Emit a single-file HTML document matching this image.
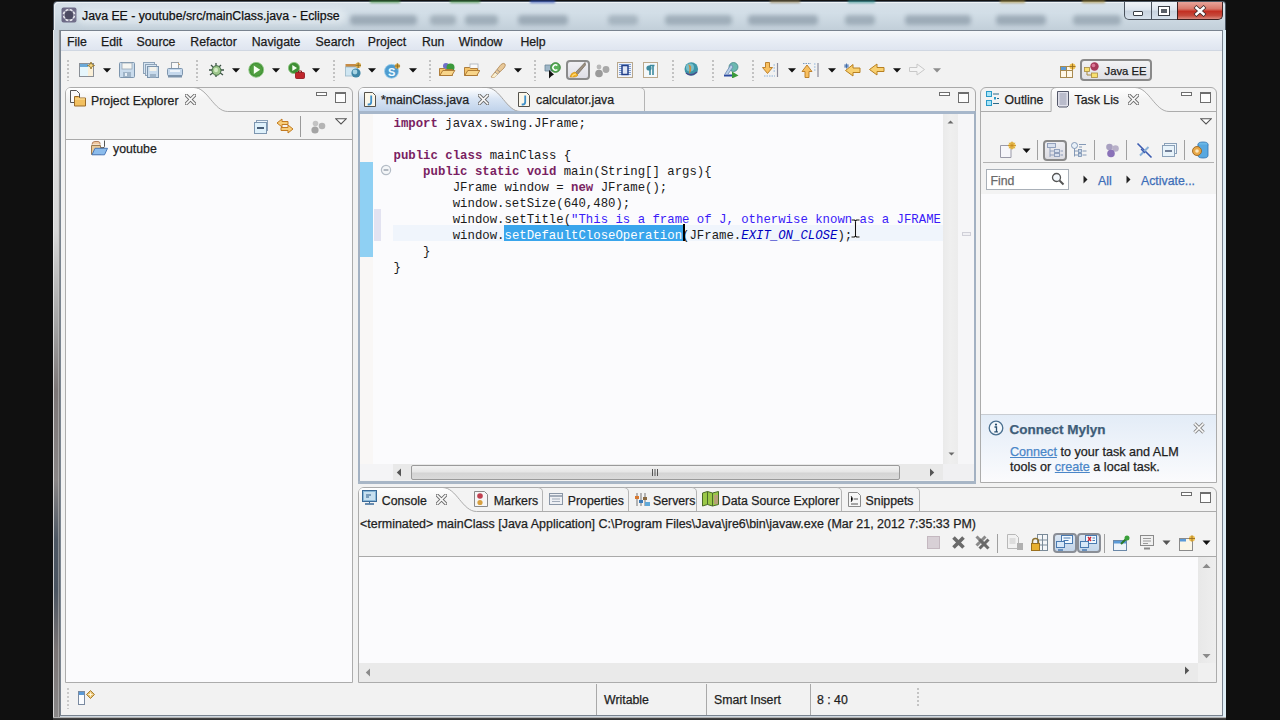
<!DOCTYPE html>
<html><head><meta charset="utf-8">
<style>
*{margin:0;padding:0;box-sizing:border-box}
html,body{width:1280px;height:720px;overflow:hidden;background:#101010}
body{position:relative;font-family:"Liberation Sans",sans-serif;font-size:12.3px;color:#1c1c1c}
.a{position:absolute}
.t{position:absolute;white-space:pre;line-height:16px;font-size:12.3px;-webkit-text-stroke:0.25px currentColor}
.code{position:absolute;font-family:"Liberation Mono",monospace;font-size:12.33px;white-space:pre;line-height:16px;color:#1a1a1a}
.kw{color:#7a1f62;font-weight:bold}
.str{color:#3a1cf8}
.fld{color:#0000c0;font-style:italic}

#root{position:absolute;left:0;top:0;width:1280px;height:720px;overflow:hidden;filter:blur(0.3px)}

</style></head>
<body>
<div class="a" style="left:53px;top:1px;width:1173px;height:719px;background:linear-gradient(180deg,#c3d0dc 0%,#cdd9e4 20%,#d5dfe8 60%,#cfd9e2 100%);border:1px solid #4c5661;border-radius:4px 3px 0 0"></div>
<div class="a" style="left:53px;top:30px;width:7px;height:690px;background:linear-gradient(180deg,#c8d2da 0px,#dcdcdc 120px,#d8d8d8 200px,#a0a0a0 300px,#7c7676 360px,#8a8686 450px,#4c5662 510px,#4a5460 560px,#7a7474 620px,#8a8888 690px)"></div>
<div class="a" style="left:53px;top:30px;width:1px;height:690px;background:rgba(240,240,240,.75)"></div>
<div class="a" style="left:58px;top:30px;width:1px;height:690px;background:rgba(200,200,200,.5)"></div>
<div class="a" style="left:59px;top:30px;width:1px;height:690px;background:rgba(110,110,110,.6)"></div>
<div class="a" style="left:1223px;top:30px;width:3px;height:690px;background:#dfeef6"></div>
<div class="a" style="left:1226px;top:0px;width:54px;height:720px;background:#101010"></div>
<div class="a" style="left:53px;top:717px;width:1173px;height:3px;background:linear-gradient(180deg,#b0b0b0 0px,#b0b0b0 1px,#4a4a4a 1px,#2e2e2e 3px)"></div>
<div class="a" style="left:54px;top:2px;width:1171px;height:28px;background:linear-gradient(180deg,#d6e0e8 0%,#d2dee7 40%,#c2cfd9 100%);border-radius:5px 5px 0 0;box-shadow:inset 0 1px 0 #eef2f5,inset 1px 0 0 #e8ecf0"></div>
<div class="a" style="left:350px;top:15px;width:67px;height:10px;background:rgba(60,78,95,0.32);filter:blur(2px);border-radius:4px"></div>
<div class="a" style="left:430px;top:15px;width:26px;height:10px;background:rgba(60,78,95,0.28);filter:blur(2px);border-radius:4px"></div>
<div class="a" style="left:465px;top:15px;width:33px;height:10px;background:rgba(60,78,95,0.3);filter:blur(2px);border-radius:4px"></div>
<div class="a" style="left:518px;top:15px;width:50px;height:10px;background:rgba(60,78,95,0.32);filter:blur(2px);border-radius:4px"></div>
<div class="a" style="left:608px;top:15px;width:30px;height:10px;background:rgba(60,78,95,0.25);filter:blur(2px);border-radius:4px"></div>
<div class="a" style="left:665px;top:15px;width:67px;height:10px;background:rgba(60,78,95,0.3);filter:blur(2px);border-radius:4px"></div>
<div class="a" style="left:748px;top:15px;width:70px;height:10px;background:rgba(60,78,95,0.32);filter:blur(2px);border-radius:4px"></div>
<div class="a" style="left:845px;top:15px;width:30px;height:10px;background:rgba(60,78,95,0.3);filter:blur(2px);border-radius:4px"></div>
<div class="a" style="left:905px;top:15px;width:66px;height:10px;background:rgba(60,78,95,0.32);filter:blur(2px);border-radius:4px"></div>
<div class="a" style="left:996px;top:15px;width:50px;height:10px;background:rgba(60,78,95,0.32);filter:blur(2px);border-radius:4px"></div>
<div class="a" style="left:1073px;top:15px;width:48px;height:10px;background:rgba(60,78,95,0.3);filter:blur(2px);border-radius:4px"></div>
<div class="a" style="left:370px;top:0px;width:30px;height:3px;background:#3f8a3f;filter:blur(1px);opacity:.7"></div>
<div class="a" style="left:450px;top:0px;width:30px;height:3px;background:#3f8a3f;filter:blur(1px);opacity:.7"></div>
<div class="a" style="left:530px;top:0px;width:25px;height:3px;background:#2a4ab0;filter:blur(1px);opacity:.7"></div>
<div class="a" style="left:770px;top:0px;width:30px;height:3px;background:#8a7a50;filter:blur(1px);opacity:.7"></div>
<div class="a" style="left:848px;top:0px;width:27px;height:3px;background:#2a8a8a;filter:blur(1px);opacity:.7"></div>
<div class="a" style="left:1000px;top:0px;width:25px;height:3px;background:#a08a40;filter:blur(1px);opacity:.7"></div>
<div class="a" style="left:1082px;top:0px;width:23px;height:3px;background:#a08a40;filter:blur(1px);opacity:.7"></div>
<svg class="a" style="left:61px;top:7px;" width="16" height="16" viewBox="0 0 16 16"><rect x="0.5" y="0.5" width="15" height="15" rx="2" fill="#6d6a86"/><circle cx="8" cy="8" r="6.3" fill="#e8e8ee"/><circle cx="8" cy="8" r="4.6" fill="#4d4b62"/><path d="M8 1.2v2M8 12.8v2M1.2 8h2M12.8 8h2M3.2 3.2l1.4 1.4M11.4 11.4l1.4 1.4M3.2 12.8l1.4-1.4M11.4 4.6l1.4-1.4" stroke="#6d6a86" stroke-width="1.3"/></svg>
<div class="a" style="left:78px;top:9px;width:268px;height:15px;background:rgba(236,242,246,.55);filter:blur(3px);border-radius:7px"></div>
<div class="t" style="left:82.0px;top:8.44px;color:#111;font-size:12.3px;">Java EE - youtube/src/mainClass.java - Eclipse</div>
<div class="a" style="left:1124px;top:2px;width:54px;height:18px;border:1px solid #4a525c;border-top:none;border-radius:0 0 0 5px;background:linear-gradient(180deg,#f1f4f8 0%,#dde5ee 45%,#c9d4e0 55%,#d8e2ec 100%)"></div>
<div class="a" style="left:1151px;top:2px;width:1px;height:17px;background:#4a525c"></div>
<div class="a" style="left:1177px;top:2px;width:46px;height:18px;border:1px solid #3d2020;border-top:none;border-radius:0 0 5px 0;background:linear-gradient(180deg,#e8a59a 0%,#d9786a 40%,#c32f22 55%,#c64a3c 80%,#dc8b7f 100%)"></div>
<div class="a" style="left:1133px;top:11px;width:10px;height:5px;border:1px solid #3a3f46;background:#fff;border-radius:1px"></div>
<div class="a" style="left:1158px;top:6px;width:12px;height:10px;border:1px solid #3a3f46;background:#fff"></div>
<div class="a" style="left:1161px;top:9px;width:6px;height:4px;background:#5a6068"></div>
<svg class="a" style="left:1193px;top:5px;" width="14" height="12" viewBox="0 0 14 12"><path d="M2 1.5L12 10.5M12 1.5L2 10.5" stroke="#3a2a2a" stroke-width="4"/><path d="M2.5 2L11.5 10M11.5 2L2.5 10" stroke="#fff" stroke-width="2.4"/></svg>
<div class="a" style="left:60px;top:30px;width:1163px;height:686px;background:#f2f2f2;border:1px solid #79838f"></div>
<div class="a" style="left:61px;top:31px;width:1161px;height:20px;background:linear-gradient(180deg,#f6f8fb 0%,#e8edf5 50%,#dfe5f0 100%);border-bottom:1px solid #d0d7e2"></div>
<div class="t" style="left:67.0px;top:33.74px;color:#1a1a1a;font-size:12.3px;">File</div>
<div class="t" style="left:101.0px;top:33.74px;color:#1a1a1a;font-size:12.3px;">Edit</div>
<div class="t" style="left:136.5px;top:33.74px;color:#1a1a1a;font-size:12.3px;">Source</div>
<div class="t" style="left:190.3px;top:33.74px;color:#1a1a1a;font-size:12.3px;">Refactor</div>
<div class="t" style="left:251.7px;top:33.74px;color:#1a1a1a;font-size:12.3px;">Navigate</div>
<div class="t" style="left:315.6px;top:33.74px;color:#1a1a1a;font-size:12.3px;">Search</div>
<div class="t" style="left:367.8px;top:33.74px;color:#1a1a1a;font-size:12.3px;">Project</div>
<div class="t" style="left:421.9px;top:33.74px;color:#1a1a1a;font-size:12.3px;">Run</div>
<div class="t" style="left:458.7px;top:33.74px;color:#1a1a1a;font-size:12.3px;">Window</div>
<div class="t" style="left:520.4px;top:33.74px;color:#1a1a1a;font-size:12.3px;">Help</div>
<div class="a" style="left:67px;top:60px;width:2px;height:21px;background:repeating-linear-gradient(180deg,#bdbdbd 0 2px,transparent 2px 4px);opacity:.9"></div>
<svg class="a" style="left:79px;top:62px;" width="16" height="16" viewBox="0 0 16 16"><rect x="0.5" y="1.5" width="14" height="13" fill="#e6f6fc" stroke="#8a8f96"/><rect x="1" y="2" width="8" height="3" fill="#6aa9d8"/><rect x="9" y="5" width="5" height="9" fill="#fbf0d8"/><path d="M12 0L13 2.5L15.5 3.5L13 4.5L12 7L11 4.5L8.5 3.5L11 2.5z" fill="#f6d680" stroke="#8a6a20" stroke-width=".8"/></svg>
<svg class="a" style="left:102.5px;top:67.5px;" width="8" height="5" viewBox="0 0 8 5"><path d="M0 0.2H8L4 4.6Z" fill="#111"/></svg>
<svg class="a" style="left:119px;top:62px;" width="16" height="16" viewBox="0 0 16 16"><rect x="0.5" y="0.5" width="15" height="15" rx="1" fill="#c9dbec" stroke="#7d95ad"/><rect x="3" y="1" width="10" height="6" fill="#f6f6f2" stroke="#9aa8b6" stroke-width=".8"/><rect x="4" y="10" width="8" height="5" fill="#9fb4c8"/><rect x="6" y="11" width="2" height="3" fill="#e6eef6"/></svg>
<svg class="a" style="left:143px;top:62px;" width="16" height="16" viewBox="0 0 16 16"><rect x="0.5" y="0.5" width="11" height="11" fill="#d7e5f2" stroke="#8ea3b8"/><rect x="2.5" y="2.5" width="11" height="11" fill="#d7e5f2" stroke="#8ea3b8"/><rect x="4.5" y="4.5" width="11" height="11" fill="#c9dbec" stroke="#7d95ad"/><rect x="6.5" y="5" width="7" height="4" fill="#f4f2ea"/><rect x="7" y="12" width="6" height="3.5" fill="#9fb4c8"/></svg>
<svg class="a" style="left:167px;top:62px;" width="16" height="16" viewBox="0 0 16 16"><rect x="4.5" y="0.5" width="7" height="6" fill="#f9f9f9" stroke="#9aa2aa"/><path d="M11 1l2 2" stroke="#d9a860"/><rect x="0.5" y="6.5" width="15" height="7" rx="1" fill="#c5d8ec" stroke="#7f96ae"/><rect x="3" y="8" width="10" height="2" fill="#eef4fa"/><rect x="1" y="13" width="14" height="2.5" fill="#7c93ab"/></svg>
<div class="a" style="left:196px;top:60px;width:2px;height:21px;background:repeating-linear-gradient(180deg,#bdbdbd 0 2px,transparent 2px 4px);opacity:.9"></div>
<svg class="a" style="left:208px;top:62px;" width="17" height="16" viewBox="0 0 17 16"><g stroke="#3d5247" stroke-width="1.3" fill="none"><path d="M8 1v3M3 3l3 3M13 3l-3 3M1 8h4M16 8h-4M2 13l4-3M15 13l-4-3M8 15v-2"/></g><ellipse cx="8.5" cy="8.5" rx="4.5" ry="4.8" fill="#9cc58a" stroke="#3f6a40" stroke-width="1"/><ellipse cx="8" cy="8" rx="2" ry="2.3" fill="#d3ecc4"/></svg>
<svg class="a" style="left:232px;top:67.5px;" width="8" height="5" viewBox="0 0 8 5"><path d="M0 0.2H8L4 4.6Z" fill="#111"/></svg>
<svg class="a" style="left:248px;top:62px;" width="17" height="16" viewBox="0 0 17 16"><circle cx="8.2" cy="7.8" r="7.4" fill="#3f8f35" stroke="#8cc77f" stroke-width=".9"/><circle cx="8.2" cy="7.8" r="6" fill="#4f9e3f"/><path d="M5.8 3.6L12.2 7.8L5.8 12Z" fill="#f8fff4"/></svg>
<svg class="a" style="left:272px;top:67.5px;" width="8" height="5" viewBox="0 0 8 5"><path d="M0 0.2H8L4 4.6Z" fill="#111"/></svg>
<svg class="a" style="left:288px;top:62px;" width="18" height="17" viewBox="0 0 18 17"><circle cx="6" cy="6" r="5.6" fill="#3f8f35" stroke="#8cc77f" stroke-width=".8"/><path d="M4.3 3L9 6L4.3 9Z" fill="#f6fff2"/><rect x="7.5" y="10.5" width="9" height="6" rx="1" fill="#c0262c" stroke="#8b1216" stroke-width=".8"/><path d="M10.5 10.5v-1.5h3v1.5" stroke="#8b1216" fill="none"/></svg>
<svg class="a" style="left:312px;top:67.5px;" width="8" height="5" viewBox="0 0 8 5"><path d="M0 0.2H8L4 4.6Z" fill="#111"/></svg>
<div class="a" style="left:333px;top:60px;width:2px;height:21px;background:repeating-linear-gradient(180deg,#bdbdbd 0 2px,transparent 2px 4px);opacity:.9"></div>
<svg class="a" style="left:345px;top:62px;" width="17" height="16" viewBox="0 0 17 16"><rect x="0.5" y="2" width="12" height="3" fill="#c68b45"/><rect x="0.5" y="5" width="12" height="9" fill="#cfe6f2" stroke="#9ab7c8" stroke-width=".8"/><circle cx="11" cy="11" r="4.6" fill="#3f86a6"/><circle cx="10" cy="10" r="2.4" fill="#bfe6f2" opacity=".8"/><circle cx="13.2" cy="3.3" r="2.8" fill="#e0b050"/><path d="M13.2 0.5v5.6M10.4 3.3h5.6" stroke="#8a6a20" stroke-width=".9"/></svg>
<svg class="a" style="left:368px;top:67.5px;" width="8" height="5" viewBox="0 0 8 5"><path d="M0 0.2H8L4 4.6Z" fill="#111"/></svg>
<svg class="a" style="left:384px;top:63px;" width="17" height="16" viewBox="0 0 17 16"><circle cx="7.5" cy="8.3" r="7" fill="#4f9ccf" stroke="#a2d4ef" stroke-width=".8"/><text x="7.6" y="12.6" font-family="Liberation Sans" font-weight="bold" font-size="11" fill="#f0fbff" text-anchor="middle">S</text><circle cx="13.4" cy="3" r="2.6" fill="#e0b050"/><path d="M13.4 0.3v5.4M10.7 3h5.4" stroke="#8a6a20" stroke-width=".9"/></svg>
<svg class="a" style="left:408.5px;top:67.5px;" width="8" height="5" viewBox="0 0 8 5"><path d="M0 0.2H8L4 4.6Z" fill="#111"/></svg>
<div class="a" style="left:429px;top:60px;width:2px;height:21px;background:repeating-linear-gradient(180deg,#bdbdbd 0 2px,transparent 2px 4px);opacity:.9"></div>
<svg class="a" style="left:439px;top:62px;" width="17" height="15" viewBox="0 0 17 15"><circle cx="7" cy="4" r="3" fill="#6e6ec8"/><circle cx="11.5" cy="5.5" r="4" fill="#3c9a3c"/><path d="M0.5 6.5h5l1 1h7v6h-13z" fill="#f5c46a" stroke="#a87430" stroke-width=".9"/><path d="M0.8 13.5l3-5h12l-3 5z" fill="#f8d58a" stroke="#a87430" stroke-width=".9"/></svg>
<svg class="a" style="left:464px;top:62px;" width="16" height="15" viewBox="0 0 16 15"><rect x="6" y="2" width="8" height="6" fill="#fafafa" stroke="#a8b0b8" stroke-width=".8"/><path d="M0.5 5.5h5l1 1h7v7h-13z" fill="#f5c46a" stroke="#a87430" stroke-width=".9"/><path d="M0.8 13.5l3-5h12l-3 5z" fill="#f8d58a" stroke="#a87430" stroke-width=".9"/></svg>
<svg class="a" style="left:489px;top:62px;" width="18" height="16" viewBox="0 0 18 16"><path d="M2 15L12 2.5Q14.5 0.5 16 2Q17 3.5 15 6L5 15.5Z" fill="#e8c898" stroke="#b59060" stroke-width=".9"/><path d="M2.5 15L7 10L9 12L5 15.5Z" fill="#faf0d0"/><path d="M6 10l3 2.5M8 7.5l3 2.5" stroke="#9a8f88" stroke-width="1"/></svg>
<svg class="a" style="left:513.5px;top:67.5px;" width="8" height="5" viewBox="0 0 8 5"><path d="M0 0.2H8L4 4.6Z" fill="#111"/></svg>
<div class="a" style="left:534px;top:60px;width:2px;height:21px;background:repeating-linear-gradient(180deg,#bdbdbd 0 2px,transparent 2px 4px);opacity:.9"></div>
<svg class="a" style="left:544px;top:62px;" width="17" height="17" viewBox="0 0 17 17"><path d="M1 3h7v6H1z" fill="#9fb7c8" stroke="#6a8598" stroke-width=".8"/><circle cx="11.5" cy="5.5" r="4.8" fill="#5ab25a" stroke="#2f7a2f" stroke-width=".9"/><path d="M13.3 3.6A2.6 2.6 0 1 0 13.3 7.4" fill="none" stroke="#fff" stroke-width="1.4"/><path d="M5 8v8.5l2.5-2.5l2.5-1.5z" fill="#111"/></svg>
<div class="a" style="left:565.5px;top:59.5px;width:24px;height:20.5px;border:2px solid #8b8b8b;border-radius:4px;background:linear-gradient(180deg,#f0f0f4,#dedee6)"></div>
<svg class="a" style="left:569px;top:62px;" width="17" height="16" viewBox="0 0 17 16"><path d="M16 0.5L6.5 10.5L8.5 12.5L16.5 3z" fill="#9c9080" stroke="#6e6458" stroke-width=".7"/><path d="M1 15Q2 10.5 6 10L9 13Q8 15.5 1 15z" fill="#f4b428" stroke="#c88a10" stroke-width=".6"/><path d="M3 14.5Q4.5 12 7 12" stroke="#fde08a" stroke-width="1.2" fill="none"/></svg>
<svg class="a" style="left:595px;top:64px;" width="15" height="14" viewBox="0 0 15 14"><circle cx="4" cy="9.5" r="3.8" fill="#9a9a9a"/><circle cx="11" cy="5.5" r="3.4" fill="#a8a8a8"/><circle cx="4" cy="3" r="2.4" fill="#b8b8b8"/></svg>
<svg class="a" style="left:617px;top:62px;" width="16" height="16" viewBox="0 0 16 16"><rect x="0.5" y="0.5" width="15" height="15" fill="#f2f4fa" stroke="#b8a88e"/><path d="M2 2.5h12M2 4.5h12M2 6.5h12M2 8.5h12M2 10.5h12M2 12.5h12" stroke="#7f9fd0" stroke-width="1"/><rect x="5" y="3.5" width="6" height="9" fill="#dfe6f6" stroke="#23408a" stroke-width="1.5"/></svg>
<svg class="a" style="left:643px;top:62px;" width="15" height="16" viewBox="0 0 15 16"><rect x="0.5" y="0.5" width="14" height="15" fill="#f4f8fa" stroke="#bba88c"/><path d="M7 3.5h4.5M7 3.5v9.5M10 3.5v9.5" stroke="#3d8a9e" stroke-width="1.6"/><circle cx="6" cy="6" r="2.6" fill="#3d8a9e"/></svg>
<div class="a" style="left:672px;top:60px;width:2px;height:21px;background:repeating-linear-gradient(180deg,#bdbdbd 0 2px,transparent 2px 4px);opacity:.9"></div>
<svg class="a" style="left:684px;top:62px;" width="15" height="14" viewBox="0 0 15 14"><circle cx="7.3" cy="7" r="6.8" fill="#3d95a8"/><circle cx="6" cy="5.5" r="4" fill="#8fd3dc" opacity=".7"/><path d="M4 2Q6 5 5 12Q8 9 7 4z" fill="#d08838" opacity=".9"/><path d="M2 11Q7 15 13 10" stroke="#4a4a8a" stroke-width="1.4" fill="none"/></svg>
<div class="a" style="left:712px;top:60px;width:2px;height:21px;background:repeating-linear-gradient(180deg,#bdbdbd 0 2px,transparent 2px 4px);opacity:.9"></div>
<svg class="a" style="left:723px;top:62px;" width="17" height="16" viewBox="0 0 17 16"><circle cx="10.5" cy="5" r="4.5" fill="#6cb8b0" stroke="#3a8080" stroke-width=".7"/><path d="M2 12L8 2.5L10 5L5 12" fill="#b8d0ea" stroke="#6a88b0" stroke-width=".8"/><path d="M1 13.5h9" stroke="#2a4aa0" stroke-width="2"/><path d="M9 9.5l6.5 4l-6.5 3z" fill="#3a9a3a"/></svg>
<div class="a" style="left:752px;top:60px;width:2px;height:21px;background:repeating-linear-gradient(180deg,#bdbdbd 0 2px,transparent 2px 4px);opacity:.9"></div>
<svg class="a" style="left:762px;top:61px;" width="17" height="18" viewBox="0 0 17 18"><path d="M3.5 1.5h4v5h3l-5 6l-5-6h3z" fill="#f8c060" stroke="#b87820" stroke-width=".9"/><path d="M11.5 4h2M11.5 7h2M11.5 10h2M2 15h11" stroke="#8ab0d8" stroke-width="1" stroke-dasharray="1.5 1"/><path d="M15.5 2v14" stroke="#8a8a9a" stroke-width="1.2"/></svg>
<svg class="a" style="left:787.5px;top:67.5px;" width="8" height="5" viewBox="0 0 8 5"><path d="M0 0.2H8L4 4.6Z" fill="#111"/></svg>
<svg class="a" style="left:801px;top:61px;" width="18" height="18" viewBox="0 0 18 18"><path d="M8 16.5h-4v-6H1l5-6.5l5 6.5H8z" fill="#f8c060" stroke="#b87820" stroke-width=".9"/><path d="M2 2.5h8" stroke="#7a9ac0" stroke-width="1" stroke-dasharray="1.5 1"/><path d="M13 3h1.5M13 6h1.5M13 9h1.5" stroke="#8ab0d8" stroke-width="1"/><path d="M17 2v14" stroke="#8a8a9a" stroke-width="1.2"/></svg>
<svg class="a" style="left:828px;top:67.5px;" width="8" height="5" viewBox="0 0 8 5"><path d="M0 0.2H8L4 4.6Z" fill="#111"/></svg>
<svg class="a" style="left:843px;top:63px;" width="18" height="14" viewBox="0 0 18 14"><path d="M17 5H10V1.5L2.5 7.5L10 13V9.5H17z" fill="#f8d070" stroke="#b88020" stroke-width="1"/><path d="M3.5 0.5v5M1 3h5M1.8 1.2l3.4 3.6M5.2 1.2L1.8 4.8" stroke="#3a68a8" stroke-width=".9"/></svg>
<svg class="a" style="left:868px;top:63px;" width="17" height="13" viewBox="0 0 17 13"><path d="M16 4.5H9V1L1.5 6.5L9 12V8.5h7z" fill="#f8d070" stroke="#b88020" stroke-width="1"/></svg>
<svg class="a" style="left:892.5px;top:67.5px;" width="8" height="5" viewBox="0 0 8 5"><path d="M0 0.2H8L4 4.6Z" fill="#111"/></svg>
<svg class="a" style="left:908px;top:63px;" width="18" height="13" viewBox="0 0 18 13"><path d="M1.5 4.5H9V1l7.5 5.5L9 12V8.5H1.5z" fill="#f4f4f4" stroke="#c8c8c8" stroke-width="1"/></svg>
<svg class="a" style="left:933px;top:67.5px;" width="8" height="5" viewBox="0 0 8 5"><path d="M0 0.2H8L4 4.6Z" fill="#8e8e8e"/></svg>
<svg class="a" style="left:1060px;top:63px;" width="16" height="15" viewBox="0 0 16 15"><rect x="0.5" y="3.5" width="12" height="11" fill="#fff8e8" stroke="#a88a50"/><path d="M0.5 7.5h12M6.5 3.5v11" stroke="#a88a50"/><rect x="1" y="4" width="5" height="3" fill="#5a9ad8"/><circle cx="12.5" cy="3.5" r="3" fill="#f0c050"/><path d="M12.5 0.5v6M9.5 3.5h6" stroke="#9a7020" stroke-width=".9"/></svg>
<div class="a" style="left:1080px;top:59px;width:72px;height:22px;border:2px solid #8a8a8a;border-radius:4px;background:linear-gradient(180deg,#f2f2f4,#e0e0e6)"></div>
<svg class="a" style="left:1084px;top:62px;" width="16" height="16" viewBox="0 0 16 16"><rect x="0.5" y="5.5" width="5" height="4" fill="#f8e070" stroke="#a88a40" stroke-width=".8"/><rect x="7.5" y="11" width="6" height="4.5" fill="#f8e070" stroke="#a88a40" stroke-width=".8"/><path d="M3 9.5v3.5h4.5" stroke="#a88a40" fill="none"/><circle cx="10.5" cy="4.5" r="4.2" fill="#a83a5a"/><circle cx="9.5" cy="3.5" r="1.8" fill="#e888a8" opacity=".8"/></svg>
<div class="t" style="left:1104.5px;top:63.28px;color:#1a1a1a;font-size:11.3px;">Java EE</div>
<div class="a" style="left:65px;top:87px;width:288px;height:596px;border:1px solid #acacac;border-radius:6px 6px 0 0;background:#f3f3f3"></div>
<svg class="a" style="left:65px;top:87px;" width="288" height="25" viewBox="0 0 288 25"><defs><linearGradient id="gpe" x1="0" y1="0" x2="0" y2="1"><stop offset="0" stop-color="#ffffff"/><stop offset="0.5" stop-color="#f3f3f3"/><stop offset="1" stop-color="#f3f3f3"/></linearGradient></defs><path d="M1,25 L1,6 Q1,1 6,1 L128.75,1 C142.75,1 148.75,24.5 162.75,24.5 L162.75,25 Z" fill="url(#gpe)"/><path d="M124.75,0.5 L128.75,0.5 C142.75,0.5 148.75,24.5 162.75,24.5 L288,24.5" fill="none" stroke="#acacac" stroke-width="1"/></svg>
<div class="a" style="left:66px;top:139px;width:286px;height:1px;background:#a9a9a9"></div>
<div class="a" style="left:66px;top:140px;width:286px;height:542px;background:#fbfbfd"></div>
<div class="t" style="left:91.0px;top:92.64px;color:#1e1e1e;font-size:12.3px;">Project Explorer</div>
<div class="t" style="left:113.0px;top:141.34px;color:#1e1e1e;font-size:12.3px;">youtube</div>
<div class="a" style="left:358px;top:87px;width:618px;height:397px;border:1px solid #a9a9a9;border-radius:6px 6px 0 0;background:#f3f3f3"></div>
<svg class="a" style="left:358px;top:87px;" width="618" height="25" viewBox="0 0 618 25"><defs><linearGradient id="ged" x1="0" y1="0" x2="0" y2="1"><stop offset="0" stop-color="#ffffff"/><stop offset="0.45" stop-color="#d9e5f4"/><stop offset="1" stop-color="#bed1ea"/></linearGradient></defs><path d="M1,25 L1,6 Q1,1 6,1 L128.39999999999998,1 C142.39999999999998,1 148.39999999999998,24.5 162.39999999999998,24.5 L162.39999999999998,25 Z" fill="url(#ged)"/><path d="M124.39999999999998,0.5 L128.39999999999998,0.5 C142.39999999999998,0.5 148.39999999999998,24.5 162.39999999999998,24.5 L618,24.5" fill="none" stroke="#a3a3a3" stroke-width="1"/><path d="M286.5,24 L286.5,5 Q286.5,1 282,0.5" fill="none" stroke="#b4b4b4" stroke-width="1"/></svg>
<div class="a" style="left:359px;top:111px;width:616px;height:3px;background:#a7b7cb"></div>
<div class="a" style="left:358px;top:111px;width:2px;height:372px;background:#a3b1c2"></div>
<div class="a" style="left:974px;top:111px;width:2px;height:372px;background:#a3b1c2"></div>
<div class="a" style="left:358px;top:481px;width:618px;height:3px;background:#a8b6c6"></div>
<div class="a" style="left:360px;top:114px;width:614px;height:366px;background:#fbfbfd"></div>
<div class="t" style="left:380.9px;top:92.44px;color:#1e1e1e;font-size:12.3px;">*mainClass.java</div>
<div class="t" style="left:536.1px;top:92.44px;color:#1e1e1e;font-size:12.3px;">calculator.java</div>
<div class="a" style="left:980px;top:87px;width:237px;height:396px;border:1px solid #acacac;border-radius:6px 6px 0 0;background:#f3f3f3"></div>
<svg class="a" style="left:980px;top:87px;" width="237" height="25" viewBox="0 0 237 25"><defs><linearGradient id="gtl" x1="0" y1="0" x2="0" y2="1"><stop offset="0" stop-color="#ffffff"/><stop offset="0.5" stop-color="#f3f3f3"/><stop offset="1" stop-color="#f3f3f3"/></linearGradient></defs><path d="M71.09999999999991,25 L71.09999999999991,6 Q71.09999999999991,1 76.59999999999991,1 L155,1 C169,1 175,24.5 189,24.5 L189,25 Z" fill="url(#gtl)"/><path d="M0,24.5 L71.09999999999991,24.5 L71.09999999999991,6 Q71.09999999999991,0.5 76.59999999999991,0.5 M151,0.5 L155,0.5 C169,0.5 175,24.5 189,24.5 L237,24.5" fill="none" stroke="#acacac" stroke-width="1"/></svg>
<div class="a" style="left:981px;top:194px;width:235px;height:221px;background:#fbfbfd"></div>
<div class="t" style="left:1004.5px;top:92.44px;color:#1e1e1e;font-size:12.3px;">Outline</div>
<div class="t" style="left:1074.6px;top:92.44px;color:#1e1e1e;font-size:12.3px;">Task Lis</div>
<div class="a" style="left:358px;top:487px;width:859px;height:196px;border:1px solid #acacac;border-radius:6px 6px 0 0;background:#f3f3f3"></div>
<svg class="a" style="left:358px;top:487px;" width="859" height="25" viewBox="0 0 859 25"><defs><linearGradient id="gco" x1="0" y1="0" x2="0" y2="1"><stop offset="0" stop-color="#ffffff"/><stop offset="0.5" stop-color="#f3f3f3"/><stop offset="1" stop-color="#f3f3f3"/></linearGradient></defs><path d="M1,25 L1,6 Q1,1 6,1 L84.5,1 C98.5,1 104.5,24.5 118.5,24.5 L118.5,25 Z" fill="url(#gco)"/><path d="M80.5,0.5 L84.5,0.5 C98.5,0.5 104.5,24.5 118.5,24.5 L859,24.5" fill="none" stroke="#acacac" stroke-width="1"/><path d="M184.5,24 L184.5,5 Q184.5,1 180,0.5" fill="none" stroke="#b4b4b4" stroke-width="1"/><path d="M270.5,24 L270.5,5 Q270.5,1 266,0.5" fill="none" stroke="#b4b4b4" stroke-width="1"/><path d="M338.5,24 L338.5,5 Q338.5,1 334,0.5" fill="none" stroke="#b4b4b4" stroke-width="1"/><path d="M483.5,24 L483.5,5 Q483.5,1 479,0.5" fill="none" stroke="#b4b4b4" stroke-width="1"/><path d="M561.5,24 L561.5,5 Q561.5,1 557,0.5" fill="none" stroke="#b4b4b4" stroke-width="1"/></svg>
<div class="a" style="left:359px;top:556px;width:857px;height:1px;background:#a9a9a9"></div>
<div class="a" style="left:359px;top:557px;width:857px;height:106px;background:#fbfbfd"></div>
<div class="t" style="left:381.8px;top:492.64px;color:#1e1e1e;font-size:12.3px;">Console</div>
<div class="t" style="left:493.8px;top:492.64px;color:#1e1e1e;font-size:12.3px;">Markers</div>
<div class="t" style="left:567.8px;top:492.64px;color:#1e1e1e;font-size:12.3px;">Properties</div>
<div class="t" style="left:653.0px;top:492.64px;color:#1e1e1e;font-size:12.3px;">Servers</div>
<div class="t" style="left:721.8px;top:492.64px;color:#1e1e1e;font-size:12.3px;">Data Source Explorer</div>
<div class="t" style="left:865.6px;top:492.64px;color:#1e1e1e;font-size:12.3px;">Snippets</div>
<div class="t" style="left:360.0px;top:515.89px;color:#1e1e1e;font-size:12.45px;">&lt;terminated&gt; mainClass [Java Application] C:\Program Files\Java\jre6\bin\javaw.exe (Mar 21, 2012 7:35:33 PM)</div>
<div class="a" style="left:360px;top:114px;width:13px;height:366px;background:#f9f7f6"></div>
<div class="a" style="left:360px;top:162px;width:13px;height:95px;background:#8fd0f3"></div>
<div class="a" style="left:374px;top:209px;width:7px;height:32px;background:#e3e3f1"></div>
<div class="a" style="left:393px;top:225px;width:550px;height:16px;background:#f0f5fc"></div>
<div class="a" style="left:504px;top:225px;width:179px;height:16px;background:#39a5ec"></div>
<svg class="a" style="left:380px;top:164px;" width="12" height="12" viewBox="0 0 12 12"><circle cx="6" cy="6" r="4.6" fill="#f4f6f8" stroke="#b4bcc6" stroke-width="1.2"/><path d="M3.6 6h4.8" stroke="#8d97a3" stroke-width="1.3"/></svg>
<div class="code" style="left:393.5px;top:115.51px;width:549px;height:350px;overflow:hidden"><span class="kw">import</span> javax.swing.JFrame;<br><br><span class="kw">public</span> <span class="kw">class</span> mainClass {<br>    <span class="kw">public</span> <span class="kw">static</span> <span class="kw">void</span> main(String[] args){<br>        JFrame window = <span class="kw">new</span> JFrame();<br>        window.setSize(640,480);<br>        window.setTitle(<span class="str">"This is a frame of J, otherwise known as a JFRAME</span><br>        window.<span style="color:#fff">setDefaultCloseOperation</span>(JFrame.<span class="fld">EXIT_ON_CLOSE</span>);<br>    }<br>}</div>
<div class="a" style="left:683px;top:224px;width:2px;height:17px;background:#000"></div>
<svg class="a" style="left:70px;top:90px;" width="16" height="17" viewBox="0 0 16 17"><path d="M0.5 0.5h6l3 3v9h-9z" fill="#fafafa" stroke="#555" stroke-width="1"/><path d="M4.5 6.5h4l1.5 1.5h5.5v8h-11z" fill="#f2c060" stroke="#9a6a28" stroke-width="1"/><path d="M5 9h10" stroke="#f8dc98" stroke-width="1.2"/></svg>
<svg class="a" style="left:185px;top:94px;" width="11" height="11" viewBox="0 0 11 11"><path d="M1.5 1.5L9.5 9.5M9.5 1.5L1.5 9.5" stroke="#6d6d6d" stroke-width="3.4" stroke-linecap="square"/><path d="M1.5 1.5L9.5 9.5M9.5 1.5L1.5 9.5" stroke="#fbfbfb" stroke-width="1.6" stroke-linecap="square"/></svg>
<div class="a" style="left:316px;top:92px;width:11px;height:4px;border:1px solid #6e6e6e;background:#fdfdfd"></div>
<div class="a" style="left:335px;top:92px;width:11px;height:11px;border:1px solid #6e6e6e;border-top:2px solid #6e6e6e;background:#fdfdfd"></div>
<svg class="a" style="left:254px;top:120px;" width="15" height="14" viewBox="0 0 15 14"><rect x="2.5" y="0.5" width="11" height="10" fill="#eef6fc" stroke="#8aa0b8"/><rect x="0.5" y="2.5" width="12" height="11" fill="#dff1fb" stroke="#7d96b0"/><path d="M3 8h7" stroke="#223a58" stroke-width="1.6"/></svg>
<svg class="a" style="left:276px;top:118px;" width="18" height="16" viewBox="0 0 18 16"><path d="M1 5l5-4v2.5h6v3H6V9z" fill="#f8cd78" stroke="#c27a20" stroke-width="1"/><path d="M17 11l-5-4v2.5H5v3h7V15z" fill="#f8cd78" stroke="#c27a20" stroke-width="1"/></svg>
<div class="a" style="left:300px;top:116px;width:1px;height:21px;background:#9a9a9a"></div>
<svg class="a" style="left:311px;top:120px;" width="15" height="14" viewBox="0 0 15 14"><circle cx="4" cy="10" r="3.6" fill="#a4a4a4"/><circle cx="11" cy="6" r="3.3" fill="#b4b4b4"/><circle cx="4.5" cy="3.5" r="2.8" fill="#c4c4c4"/></svg>
<svg class="a" style="left:335px;top:118px;" width="12" height="7" viewBox="0 0 12 7"><path d="M0.8 0.8h10.4L6 6z" fill="#fff" stroke="#555" stroke-width="1.1"/></svg>
<svg class="a" style="left:91px;top:140px;" width="18" height="16" viewBox="0 0 18 16"><path d="M1 4.5q0-3 3-3h3q2 0 2 2v1" fill="#f0c9a0" stroke="#b08060" stroke-width="1"/><path d="M0.5 5.5h9v9h-9z" fill="#e8c898" stroke="#9a7a50" stroke-width="1"/><path d="M1 14.8l3-6.5h12.5l-3 6.5z" fill="#8cbcec" stroke="#4a78b8" stroke-width="1"/><path d="M13.5 0.5v6q0 1.2-1.5 1.2h-2" stroke="#555" stroke-width="1" fill="none"/></svg>
<svg class="a" style="left:364px;top:92px;" width="12" height="15" viewBox="0 0 12 15"><path d="M0.5 0.5h8l3 3v11h-11z" fill="#fbf7ea" stroke="#55524c" stroke-width="1"/><path d="M7.2 3.5v6.5q0 2.5-2.5 2.5h-1" stroke="#3f8fc8" stroke-width="1.8" fill="none"/></svg>
<svg class="a" style="left:478px;top:94px;" width="11" height="11" viewBox="0 0 11 11"><path d="M1.5 1.5L9.5 9.5M9.5 1.5L1.5 9.5" stroke="#6d6d6d" stroke-width="3.4" stroke-linecap="square"/><path d="M1.5 1.5L9.5 9.5M9.5 1.5L1.5 9.5" stroke="#fbfbfb" stroke-width="1.6" stroke-linecap="square"/></svg>
<svg class="a" style="left:518px;top:92px;" width="12" height="15" viewBox="0 0 12 15"><path d="M0.5 0.5h8l3 3v11h-11z" fill="#fbf7ea" stroke="#55524c" stroke-width="1"/><path d="M7.2 3.5v6.5q0 2.5-2.5 2.5h-1" stroke="#3f8fc8" stroke-width="1.8" fill="none"/></svg>
<div class="a" style="left:939px;top:92px;width:11px;height:4px;border:1px solid #6e6e6e;background:#fdfdfd"></div>
<div class="a" style="left:958px;top:92px;width:11px;height:11px;border:1px solid #6e6e6e;border-top:2px solid #6e6e6e;background:#fdfdfd"></div>
<svg class="a" style="left:986px;top:91px;" width="14" height="16" viewBox="0 0 14 16"><rect x="0.5" y="0.5" width="5" height="5" fill="#a8e4f8" stroke="#2a9ac8"/><rect x="0.5" y="9.5" width="5" height="5" fill="#a8e4f8" stroke="#2a9ac8"/><path d="M7 3h6M8 7.5h1.5M11 7.5h2M7 12.5h6" stroke="#2a6a8a" stroke-width="1"/><rect x="8" y="6" width="2" height="2.5" fill="#2a9ac8"/></svg>
<svg class="a" style="left:1057px;top:91px;" width="13" height="17" viewBox="0 0 13 17"><path d="M0.5 0.5h11v14l-1.5 1.5h-8l-1.5-1.5z" fill="#e0e0ea" stroke="#55596a" stroke-width="1"/><path d="M2.5 3h7M2.5 5h7M2.5 7h7M2.5 9h7M2.5 11h7M2.5 13h7" stroke="#8a8fa6" stroke-width=".9"/></svg>
<svg class="a" style="left:1127.5px;top:94px;" width="11" height="11" viewBox="0 0 11 11"><path d="M1.5 1.5L9.5 9.5M9.5 1.5L1.5 9.5" stroke="#6d6d6d" stroke-width="3.4" stroke-linecap="square"/><path d="M1.5 1.5L9.5 9.5M9.5 1.5L1.5 9.5" stroke="#fbfbfb" stroke-width="1.6" stroke-linecap="square"/></svg>
<div class="a" style="left:1181px;top:92px;width:11px;height:4px;border:1px solid #6e6e6e;background:#fdfdfd"></div>
<div class="a" style="left:1200px;top:92px;width:11px;height:11px;border:1px solid #6e6e6e;border-top:2px solid #6e6e6e;background:#fdfdfd"></div>
<svg class="a" style="left:1200px;top:118px;" width="12" height="7" viewBox="0 0 12 7"><path d="M0.8 0.8h10.4L6 6z" fill="#fff" stroke="#555" stroke-width="1.1"/></svg>
<svg class="a" style="left:1000px;top:141px;" width="17" height="17" viewBox="0 0 17 17"><path d="M0.5 4.5h9l1.5 1.5v10.5h-10.5z" fill="#f6f6fa" stroke="#9a9aa8"/><circle cx="12" cy="4.5" r="3.6" fill="#f0c850" opacity=".9"/><path d="M12 0.5v8M8 4.5h8M9.3 1.8l5.4 5.4M14.7 1.8l-5.4 5.4" stroke="#c88a20" stroke-width=".8"/></svg>
<svg class="a" style="left:1022px;top:148px;" width="9" height="6" viewBox="0 0 9 6"><path d="M0.5 0.5H8.5L4.5 5z" fill="#111"/></svg>
<div class="a" style="left:1037px;top:140px;width:1px;height:20px;background:#a0a0a0"></div>
<div class="a" style="left:1043px;top:140px;width:24px;height:21px;border:2px solid #8a8a8a;border-radius:4px;background:linear-gradient(180deg,#eeeef2,#dcdce2)"></div>
<svg class="a" style="left:1047px;top:143px;" width="17" height="15" viewBox="0 0 17 15"><rect x="0.5" y="0.5" width="8" height="4" fill="#d8e0ee" stroke="#8a9ab8" stroke-width=".9"/><path d="M3 5v9M3 8h4M3 12h4" stroke="#8a9ab8" stroke-width=".9"/><rect x="7.5" y="6.5" width="5" height="3" fill="#d8e0ee" stroke="#8a9ab8" stroke-width=".9"/><rect x="7.5" y="10.5" width="5" height="3" fill="#d8e0ee" stroke="#8a9ab8" stroke-width=".9"/><path d="M13.5 8h2.5M13.5 12h2.5" stroke="#8a9ab8"/></svg>
<svg class="a" style="left:1071px;top:142px;" width="16" height="16" viewBox="0 0 16 16"><circle cx="3.5" cy="3.5" r="3" fill="#e8f0f8" stroke="#7890b0" stroke-width=".9"/><path d="M3.5 6.5v8M3.5 9h4M3.5 13h4" stroke="#7890b0" stroke-width=".9"/><rect x="7.5" y="7.5" width="3" height="3" fill="#c8d8ea" stroke="#7890b0" stroke-width=".8"/><rect x="7.5" y="11.5" width="3" height="3" fill="#c8d8ea" stroke="#7890b0" stroke-width=".8"/><path d="M11.5 9h4M11.5 13h4M8 2.5h7M8 5h3" stroke="#7890b0" stroke-width=".9"/></svg>
<div class="a" style="left:1094px;top:140px;width:1px;height:20px;background:#a0a0a0"></div>
<svg class="a" style="left:1105px;top:143px;" width="15" height="15" viewBox="0 0 15 15"><circle cx="4.5" cy="4" r="3.3" fill="#a8a0c0"/><circle cx="10.5" cy="5.5" r="3.3" fill="#b8b0c8"/><circle cx="6" cy="10.5" r="3.8" fill="#8a72b8"/></svg>
<div class="a" style="left:1126px;top:140px;width:1px;height:20px;background:#a0a0a0"></div>
<svg class="a" style="left:1136px;top:142px;" width="17" height="17" viewBox="0 0 17 17"><path d="M1.5 1.5L15.5 15.5" stroke="#3a5ab0" stroke-width="1.6"/><path d="M4 13.5L12.5 5" stroke="#8ab0d8" stroke-width="2"/><path d="M5 7l4 4" stroke="#3a5ab0" stroke-width="1.2"/></svg>
<svg class="a" style="left:1162px;top:143px;" width="15" height="14" viewBox="0 0 15 14"><rect x="2.5" y="0.5" width="12" height="10" fill="#eef6fc" stroke="#8aa0b8"/><rect x="0.5" y="2.5" width="12" height="11" fill="#e8f3fa" stroke="#8aa0b8"/><path d="M3 8h7" stroke="#4a5a78" stroke-width="1.5"/></svg>
<div class="a" style="left:1184px;top:140px;width:1px;height:20px;background:#a0a0a0"></div>
<svg class="a" style="left:1192px;top:141px;" width="17" height="18" viewBox="0 0 17 18"><ellipse cx="11" cy="3.5" rx="5" ry="2.5" fill="#6ab8e8" stroke="#2a70b0" stroke-width=".8"/><path d="M6 3.5v11q0 2.5 5 2.5t5-2.5v-11" fill="#58a8e0" stroke="#2a70b0" stroke-width=".8"/><circle cx="5" cy="10" r="4.5" fill="#e8a848" stroke="#9a6420" stroke-width=".9"/><circle cx="5" cy="10" r="1.8" fill="#fbe8c0"/></svg>
<div class="a" style="left:983px;top:162px;width:231px;height:1px;background:#b2b2b2"></div>
<div class="a" style="left:986px;top:169px;width:83px;height:21px;border:1px solid #a9b0b8;background:#fff"></div>
<div class="t" style="left:990.5px;top:172.64px;color:#6a6a6a;font-size:12.3px;">Find</div>
<svg class="a" style="left:1051px;top:172px;" width="14" height="14" viewBox="0 0 14 14"><circle cx="5.5" cy="5.5" r="4" fill="#f4f8fc" stroke="#555" stroke-width="1.3"/><path d="M8.5 8.5l4 4" stroke="#555" stroke-width="2"/></svg>
<svg class="a" style="left:1083px;top:175px;" width="5" height="9" viewBox="0 0 5 9"><path d="M0.5 0.5L4.5 4.5L0.5 8.5z" fill="#222"/></svg>
<div class="t" style="left:1098.0px;top:172.64px;color:#3d6eb8;font-size:12.3px;">All</div>
<svg class="a" style="left:1126px;top:175px;" width="5" height="9" viewBox="0 0 5 9"><path d="M0.5 0.5L4.5 4.5L0.5 8.5z" fill="#222"/></svg>
<div class="t" style="left:1141.0px;top:172.64px;color:#3d6eb8;font-size:12.3px;">Activate...</div>
<div class="a" style="left:981px;top:414px;width:235px;height:1px;background:#c8ccd2"></div>
<div class="a" style="left:981px;top:415px;width:235px;height:67px;background:linear-gradient(180deg,#e3ecf7 0%,#eef3fa 45%,#fbfbfd 100%)"></div>
<svg class="a" style="left:988px;top:420px;" width="16" height="16" viewBox="0 0 16 16"><circle cx="8" cy="8" r="6.8" fill="#f4f8fc" stroke="#4a7090" stroke-width="1.3"/><circle cx="8" cy="4.6" r="1.1" fill="#2a5070"/><path d="M6.5 7h2v4.5M6.3 11.8h3.6" stroke="#2a5070" stroke-width="1.3" fill="none"/></svg>
<div class="t" style="left:1009.5px;top:421.52px;color:#3e5d78;font-size:13.5px;font-weight:bold">Connect Mylyn</div>
<svg class="a" style="left:1193px;top:422px;" width="12" height="12" viewBox="0 0 12 12"><path d="M1.5 1.5L10.5 10.5M10.5 1.5L1.5 10.5" stroke="#8a8a8a" stroke-width="3.4"/><path d="M1.5 1.5L10.5 10.5M10.5 1.5L1.5 10.5" stroke="#fbfbfb" stroke-width="1.6"/></svg>
<div class="t" style="left:1010px;top:443.94px;font-size:12.6px;color:#1e1e1e"><span style="color:#4a86c8;text-decoration:underline">Connect</span> to your task and ALM</div>
<div class="t" style="left:1010px;top:459.14px;font-size:12.6px;color:#1e1e1e">tools or <span style="color:#4a86c8;text-decoration:underline">create</span> a local task.</div>
<div class="a" style="left:943px;top:114px;width:15px;height:350px;background:linear-gradient(90deg,#eaeaea,#efefef 50%,#ececec)"></div>
<div class="a" style="left:958px;top:114px;width:16px;height:350px;background:#f6f6f8"></div>
<svg class="a" style="left:946px;top:119px;" width="9" height="6" viewBox="0 0 9 6"><path d="M1.5 4.5L4.5 1.5L7.5 4.5z" fill="#6a6a6a"/></svg>
<svg class="a" style="left:947px;top:451px;" width="9" height="6" viewBox="0 0 9 6"><path d="M1.5 1.5L4.5 4.5L7.5 1.5z" fill="#6a6a6a"/></svg>
<div class="a" style="left:962px;top:232px;width:9px;height:4px;border:1px solid #d0d0d8;background:#f0f0f4"></div>
<div class="a" style="left:360px;top:464px;width:33px;height:16px;background:#f4f4f6"></div>
<div class="a" style="left:393px;top:464px;width:550px;height:16px;background:#e9e9e9"></div>
<div class="a" style="left:943px;top:464px;width:31px;height:16px;background:#f0f0f2"></div>
<svg class="a" style="left:396px;top:468px;" width="6" height="9" viewBox="0 0 6 9"><path d="M5 0.5L0.8 4.5L5 8.5z" fill="#555"/></svg>
<svg class="a" style="left:929px;top:468px;" width="6" height="9" viewBox="0 0 6 9"><path d="M1 0.5L5.2 4.5L1 8.5z" fill="#555"/></svg>
<div class="a" style="left:411px;top:465px;width:489px;height:15px;border:1px solid #9a9a9a;border-radius:2px;background:linear-gradient(180deg,#f2f2f2 0%,#e6e6e6 45%,#d4d4d4 55%,#dadada 100%)"></div>
<svg class="a" style="left:651px;top:469px;" width="8" height="7" viewBox="0 0 8 7"><path d="M1.5 0v7M4 0v7M6.5 0v7" stroke="#555" stroke-width="1"/></svg>
<div class="a" style="left:1198px;top:557px;width:18px;height:106px;background:linear-gradient(90deg,#e8e8e8,#eeeeee)"></div>
<svg class="a" style="left:1202px;top:563px;" width="9" height="6" viewBox="0 0 9 6"><path d="M0.5 5L4.5 0.8L8.5 5z" fill="#8a8a8a"/></svg>
<svg class="a" style="left:1202px;top:653px;" width="9" height="6" viewBox="0 0 9 6"><path d="M0.5 1L4.5 5.2L8.5 1z" fill="#8a8a8a"/></svg>
<div class="a" style="left:359px;top:663px;width:839px;height:19px;background:#eaeaea"></div>
<div class="a" style="left:1198px;top:663px;width:18px;height:19px;background:#f0f0f0"></div>
<svg class="a" style="left:365px;top:668px;" width="6" height="9" viewBox="0 0 6 9"><path d="M5 0.5L0.8 4.5L5 8.5z" fill="#8a8a8a"/></svg>
<svg class="a" style="left:1184px;top:666px;" width="6" height="9" viewBox="0 0 6 9"><path d="M1 0.5L5.2 4.5L1 8.5z" fill="#555"/></svg>
<svg class="a" style="left:849px;top:219px;" width="12" height="19" viewBox="0 0 12 19"><path d="M2.5 1h3l1 1l1-1h3M6.5 2v15M2.5 18h3l1-1l1 1h3" stroke="#fff" stroke-width="2.6" fill="none"/><path d="M2.5 1h3l1 1l1-1h3M6.5 2v15M2.5 18h3l1-1l1 1h3" stroke="#111" stroke-width="1.1" fill="none"/></svg>
<svg class="a" style="left:362px;top:490px;" width="15" height="15" viewBox="0 0 15 15"><rect x="0.5" y="0.5" width="14" height="11" fill="#8ab8d8" stroke="#3a6a98" stroke-width="1"/><rect x="2" y="2" width="11" height="8" fill="#c8e0f0"/><path d="M4 5h5M4 7h3" stroke="#2a5a88"/><path d="M3 14h9" stroke="#3a6a98" stroke-width="1.5"/><path d="M7.5 11.5v2" stroke="#3a6a98"/></svg>
<svg class="a" style="left:436px;top:494px;" width="11" height="11" viewBox="0 0 11 11"><path d="M1.5 1.5L9.5 9.5M9.5 1.5L1.5 9.5" stroke="#6d6d6d" stroke-width="3.4" stroke-linecap="square"/><path d="M1.5 1.5L9.5 9.5M9.5 1.5L1.5 9.5" stroke="#fbfbfb" stroke-width="1.6" stroke-linecap="square"/></svg>
<svg class="a" style="left:474px;top:491px;" width="15" height="16" viewBox="0 0 15 16"><path d="M0.5 0.5h10l3 3v12h-13z" fill="#f6f6f6" stroke="#8a8a8a"/><circle cx="6" cy="5" r="2.8" fill="#c04050"/><circle cx="6" cy="11.5" r="2.6" fill="#d8a040"/></svg>
<svg class="a" style="left:549px;top:493px;" width="14" height="12" viewBox="0 0 14 12"><rect x="0.5" y="0.5" width="13" height="11" fill="#eef0f4" stroke="#8a96a6"/><path d="M0.5 3h13" stroke="#8a96a6" stroke-width="1.5"/><path d="M3 6h8M3 8.5h8" stroke="#a0aab8"/></svg>
<svg class="a" style="left:635px;top:492px;" width="15" height="15" viewBox="0 0 15 15"><path d="M2 1v13M6 1v13M10 1v13" stroke="#8a8a8a" stroke-width="1.2"/><rect x="0" y="4" width="4" height="3" fill="#d87830"/><rect x="4" y="8" width="4" height="3" fill="#3a7ab8"/><rect x="8" y="5" width="4" height="3" fill="#8a6a40"/><rect x="10" y="10" width="5" height="4" fill="#60a8d8"/></svg>
<svg class="a" style="left:702px;top:491px;" width="17" height="16" viewBox="0 0 17 16"><path d="M0.5 2l5 -1.5l5 1.5l6-1.5v13l-6 1.5l-5-1.5l-5 1.5z" fill="#9ac848" stroke="#4a6a28" stroke-width="1"/><path d="M5.5 0.5v13M10.5 2v13" stroke="#4a6a28" stroke-width="1"/><rect x="12" y="4" width="4" height="9" fill="#b8a078"/></svg>
<svg class="a" style="left:848px;top:492px;" width="14" height="15" viewBox="0 0 14 15"><path d="M0.5 0.5h9l3 3v11h-12z" fill="#f6f6f6" stroke="#8a8a8a"/><path d="M3 4l2 3l-2 3M6 7h4M3 12h7" stroke="#555" stroke-width="1"/></svg>
<div class="a" style="left:1181px;top:492px;width:11px;height:4px;border:1px solid #6e6e6e;background:#fdfdfd"></div>
<div class="a" style="left:1200px;top:492px;width:11px;height:11px;border:1px solid #6e6e6e;border-top:2px solid #6e6e6e;background:#fdfdfd"></div>
<svg class="a" style="left:927px;top:536px;" width="13" height="13" viewBox="0 0 13 13"><rect x="0.5" y="0.5" width="12" height="12" fill="#d8d0d6" stroke="#c4b8c0"/></svg>
<svg class="a" style="left:951px;top:535px;" width="15" height="15" viewBox="0 0 15 15"><path d="M2.5 2.5L12.5 12.5M12.5 2.5L2.5 12.5" stroke="#6a6a6a" stroke-width="3.6"/></svg>
<svg class="a" style="left:974px;top:534px;" width="17" height="17" viewBox="0 0 17 17"><path d="M2.5 2.5L11.5 11.5M11.5 2.5L2.5 11.5" stroke="#8a8a8a" stroke-width="3"/><path d="M5.5 5.5L14.5 14.5M14.5 5.5L5.5 14.5" stroke="#6a6a6a" stroke-width="3"/></svg>
<div class="a" style="left:997px;top:534px;width:1px;height:19px;background:#a0a0a0"></div>
<svg class="a" style="left:1007px;top:534px;" width="17" height="17" viewBox="0 0 17 17"><path d="M0.5 0.5h8l3 3v11h-11z" fill="#f2f2f2" stroke="#b8b8b8"/><path d="M2.5 5h6M2.5 7h6M2.5 9h6" stroke="#c8c8c8"/><rect x="10" y="9" width="6" height="7" fill="#b0b0b0"/></svg>
<svg class="a" style="left:1031px;top:534px;" width="17" height="17" viewBox="0 0 17 17"><rect x="6.5" y="0.5" width="10" height="16" fill="#f4f6f8" stroke="#7a8a98"/><path d="M11.5 1v15M7 6h4M12 6h4M7 11h4M12 11h4" stroke="#7a8a98"/><path d="M1.5 10v-2.5q0-3 3-3t3 3V10" stroke="#8a7030" stroke-width="1.4" fill="none"/><rect x="0.5" y="9.5" width="8" height="7" fill="#e8b030" stroke="#9a7020"/></svg>
<div class="a" style="left:1052.5px;top:532.5px;width:24px;height:20px;border:2px solid #8a8e96;border-radius:4px;background:linear-gradient(180deg,#dae6f3,#c4d6ea)"></div>
<div class="a" style="left:1076.5px;top:532.5px;width:24.5px;height:20px;border:2px solid #8a8e96;border-radius:4px;background:linear-gradient(180deg,#dae6f3,#c4d6ea)"></div>
<svg class="a" style="left:1056px;top:535px;" width="17" height="16" viewBox="0 0 17 16"><rect x="5.5" y="0.5" width="11" height="8" fill="#f0f8ff" stroke="#4a7ab0"/><path d="M7.5 3h7M7.5 5.5h5" stroke="#4a7ab0"/><rect x="0.5" y="6.5" width="8" height="6" fill="#d8e8f8" stroke="#4a7ab0"/><path d="M2 15h5" stroke="#4a7ab0" stroke-width="1.5"/></svg>
<svg class="a" style="left:1080px;top:535px;" width="17" height="16" viewBox="0 0 17 16"><rect x="5.5" y="0.5" width="11" height="8" fill="#f0f8ff" stroke="#4a7ab0"/><path d="M8 2l3 4M11 2l-3 4" stroke="#d02030" stroke-width="1.3"/><path d="M12.5 3h2.5M12.5 5.5h2.5" stroke="#4a7ab0"/><rect x="0.5" y="6.5" width="8" height="6" fill="#d8e8f8" stroke="#4a7ab0"/><path d="M2 15h5" stroke="#4a7ab0" stroke-width="1.5"/></svg>
<div class="a" style="left:1104px;top:534px;width:1px;height:19px;background:#a0a0a0"></div>
<svg class="a" style="left:1113px;top:535px;" width="17" height="16" viewBox="0 0 17 16"><rect x="0.5" y="5.5" width="13" height="10" fill="#eef4fa" stroke="#6a88a8"/><rect x="1" y="6" width="12" height="2.5" fill="#5a9ad8"/><path d="M8 9l6-6" stroke="#2a7a2a" stroke-width="2"/><circle cx="14" cy="3" r="2.5" fill="#3aa03a"/></svg>
<svg class="a" style="left:1140px;top:535px;" width="14" height="15" viewBox="0 0 14 15"><rect x="0.5" y="0.5" width="13" height="10" fill="#f0f0f0" stroke="#8a8a8a"/><path d="M3 3.5h8M3 6h8M3 8.5h5" stroke="#9a9a9a"/><path d="M4 13.5h6" stroke="#8a8a8a" stroke-width="2"/></svg>
<svg class="a" style="left:1162px;top:540px;" width="9" height="6" viewBox="0 0 9 6"><path d="M0.5 0.5H8.5L4.5 5z" fill="#555"/></svg>
<svg class="a" style="left:1179px;top:535px;" width="17" height="16" viewBox="0 0 17 16"><rect x="0.5" y="3.5" width="13" height="12" fill="#fbf6e6" stroke="#8a8a8a"/><rect x="1" y="4" width="6" height="2.5" fill="#5a9ad8"/><circle cx="13" cy="3.5" r="3" fill="#f0c050"/><path d="M13 0.5v6M10 3.5h6" stroke="#9a7020" stroke-width=".9"/></svg>
<svg class="a" style="left:1202px;top:540px;" width="9" height="6" viewBox="0 0 9 6"><path d="M0.5 0.5H8.5L4.5 5z" fill="#111"/></svg>
<div class="a" style="left:596px;top:684px;width:1px;height:31px;background:#a9a9a9"></div>
<div class="a" style="left:706px;top:684px;width:1px;height:31px;background:#a9a9a9"></div>
<div class="a" style="left:810px;top:684px;width:1px;height:31px;background:#a9a9a9"></div>
<div class="t" style="left:604.0px;top:691.84px;color:#1e1e1e;font-size:12.3px;">Writable</div>
<div class="t" style="left:714.0px;top:691.84px;color:#1e1e1e;font-size:12.3px;">Smart Insert</div>
<div class="t" style="left:817.0px;top:691.84px;color:#1e1e1e;font-size:12.3px;">8 : 40</div>
<div class="a" style="left:67px;top:688px;width:2px;height:21px;background:repeating-linear-gradient(180deg,#cacaca 0 2px,transparent 2px 4px)"></div>
<svg class="a" style="left:78px;top:691px;" width="8" height="15" viewBox="0 0 8 15"><rect x="0.5" y="0.5" width="6" height="13" fill="#fafcff" stroke="#7a8aa0"/><rect x="1" y="1" width="5" height="3" fill="#5a9ad8"/></svg>
<svg class="a" style="left:86px;top:690px;" width="9" height="9" viewBox="0 0 9 9"><path d="M4.5 0.5L8.5 4.5L4.5 8.5L0.5 4.5z" fill="#e8c070" stroke="#a07828" stroke-width=".9"/><path d="M4.5 2.5v4M2.5 4.5h4" stroke="#fff6d8" stroke-width="1"/></svg>
<div class="a" style="left:917px;top:688px;width:2px;height:20px;background:repeating-linear-gradient(180deg,#c4c4c4 0 2px,transparent 2px 4px)"></div>
</body></html>
